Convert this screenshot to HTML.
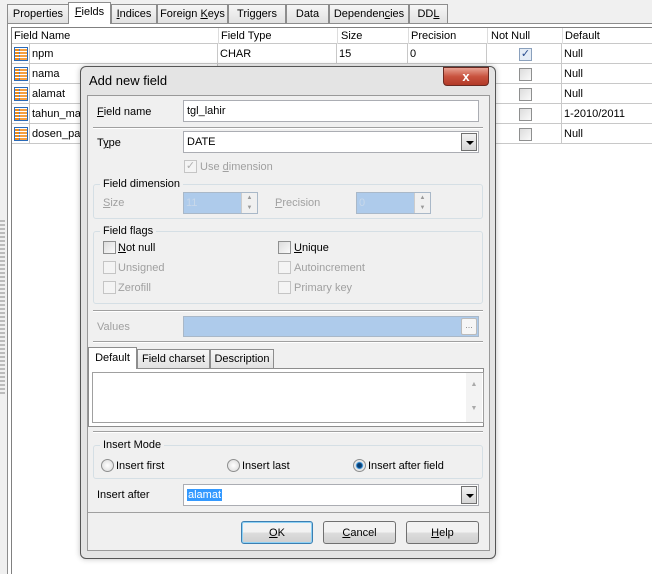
<!DOCTYPE html><html><head><style>
*{box-sizing:border-box;margin:0;padding:0}
body{width:652px;height:574px;background:#f0f0f0;font-family:"Liberation Sans",Tahoma,sans-serif;font-size:11px;color:#000;position:relative;overflow:hidden}
.a{position:absolute}
.tab{position:absolute;top:4px;height:19px;border:1px solid #8d8d8d;border-bottom:none;background:linear-gradient(#f6f6f6,#e1e1e1);text-align:center;line-height:19px}
.cell{position:absolute;height:20px;border-right:1px solid #c8c8c8;border-bottom:1px solid #c8c8c8;line-height:21px;padding-left:2px;white-space:nowrap;overflow:hidden}
.ico{position:absolute;left:14px;width:14px;height:14px;background:repeating-linear-gradient(#fff 0 1px,transparent 1px 3px),linear-gradient(90deg,#e98a1a 0 4px,#4a7fd0 4px 5px,#f5a040 5px 14px);border:1px solid #2a6ab8}
.cb{position:absolute;width:13px;height:13px;border:1px solid #8e8f8f;background:linear-gradient(135deg,#dcdcdc,#fafafa)}
.cbd{border-color:#c5c5c5;background:#f4f4f4}
.in{position:absolute;background:#fff;border:1px solid #abadb3;height:22px;line-height:21px;padding-left:3px}
.dd{position:absolute;right:1px;top:1px;width:16px;height:18px;border:1px solid #707070;background:linear-gradient(#f2f2f2,#d6d6d6)}
.dd:after{content:"";position:absolute;left:4px;top:7px;border:4px solid transparent;border-top:4px solid #000;border-bottom:none}
.grp{position:absolute;border:1px solid #d5dfe5;border-radius:3px}
.gt{position:absolute;background:#f0f0f0;padding:0 3px;top:-8px;left:6px;line-height:14px}
.sep{position:absolute;left:93px;width:390px;height:2px;border-top:1px solid #a0a0a0;border-bottom:1px solid #fff}
.dis{color:#a0a0a0}
.btn{position:absolute;top:521px;height:23px;border:1px solid #707070;border-radius:3px;background:linear-gradient(#f2f2f2 50%,#dddddd 50%,#cfcfcf);text-align:center;line-height:22px}
.rd{position:absolute;width:13px;height:13px;border-radius:50%;border:1px solid #8e8f8f;background:radial-gradient(#fff,#d8d8d8)}
.spin{position:absolute;height:22px;border:1px solid #a9b8c8;background:#aecbeb;color:#c8d8ea;line-height:20px;padding-left:2px}
.spin i{position:absolute;right:0;top:0;width:16px;height:20px;background:#f0f0f0;border-left:1px solid #ccc;font-style:normal;color:#999;font-size:6px;line-height:10px;text-align:center}
.t{margin-top:1px}
u{text-decoration:underline}
</style></head><body>
<div class="tab" style="left:7px;width:62px">Properties</div>
<div class="tab" style="left:68px;top:2px;height:22px;width:43px;background:#fff;z-index:2"><u>F</u>ields</div>
<div class="tab" style="left:111px;width:46px"><u>I</u>ndices</div>
<div class="tab" style="left:157px;width:71px">Foreign <u>K</u>eys</div>
<div class="tab" style="left:228px;width:58px">Triggers</div>
<div class="tab" style="left:286px;width:43px">Data</div>
<div class="tab" style="left:329px;width:80px">Dependen<u>c</u>ies</div>
<div class="tab" style="left:409px;width:39px">DD<u>L</u></div>
<div class="a" style="left:7px;top:23px;width:645px;height:551px;background:#fff;border-left:1px solid #8d8d8d;border-top:1px solid #8d8d8d"></div>
<div class="a" style="left:11px;top:27px;width:641px;height:547px;background:#fff;border-left:1px solid #808080;border-top:1px solid #808080"></div>
<div class="a" style="left:0;top:220px;width:5px;height:175px;background:repeating-linear-gradient(#bbb 0 2px,transparent 2px 4px)"></div>
<div class="a" style="left:12px;top:28px;width:640px;height:16px;border-bottom:1px solid #c8c8c8"></div>
<div class="a" style="left:14px;top:30px">Field Name</div><div class="a" style="left:221px;top:30px">Field Type</div><div class="a" style="left:341px;top:30px">Size</div><div class="a" style="left:411px;top:30px">Precision</div><div class="a" style="left:491px;top:30px">Not Null</div><div class="a" style="left:565px;top:30px">Default</div>
<div class="a" style="left:218px;top:28px;width:1px;height:16px;background:#ddd"></div><div class="a" style="left:337px;top:28px;width:1px;height:16px;background:#ddd"></div><div class="a" style="left:408px;top:28px;width:1px;height:16px;background:#ddd"></div><div class="a" style="left:487px;top:28px;width:1px;height:16px;background:#ddd"></div><div class="a" style="left:562px;top:28px;width:1px;height:16px;background:#ddd"></div>
<div class="cell" style="left:12px;top:44px;width:18px"></div><div class="ico" style="top:47px"></div><div class="cell" style="left:30px;top:44px;width:188px">npm</div><div class="cell" style="left:218px;top:44px;width:119px">CHAR</div><div class="cell" style="left:337px;top:44px;width:71px">15</div><div class="cell" style="left:408px;top:44px;width:79px">0</div><div class="cell" style="left:487px;top:44px;width:75px"></div><div class="cell" style="left:562px;top:44px;width:92px">Null</div>
<div class="cell" style="left:12px;top:64px;width:18px"></div><div class="ico" style="top:67px"></div><div class="cell" style="left:30px;top:64px;width:188px">nama</div><div class="cell" style="left:487px;top:64px;width:75px"></div><div class="cell" style="left:562px;top:64px;width:92px">Null</div>
<div class="cell" style="left:12px;top:84px;width:18px"></div><div class="ico" style="top:87px"></div><div class="cell" style="left:30px;top:84px;width:188px">alamat</div><div class="cell" style="left:487px;top:84px;width:75px"></div><div class="cell" style="left:562px;top:84px;width:92px">Null</div>
<div class="cell" style="left:12px;top:104px;width:18px"></div><div class="ico" style="top:107px"></div><div class="cell" style="left:30px;top:104px;width:188px">tahun_masuk</div><div class="cell" style="left:487px;top:104px;width:75px"></div><div class="cell" style="left:562px;top:104px;width:92px">1-2010/2011</div>
<div class="cell" style="left:12px;top:124px;width:18px"></div><div class="ico" style="top:127px"></div><div class="cell" style="left:30px;top:124px;width:188px">dosen_pa</div><div class="cell" style="left:487px;top:124px;width:75px"></div><div class="cell" style="left:562px;top:124px;width:92px">Null</div>
<div class="cb" style="left:519px;top:48px;border-color:#8aa0bc;background:#e4ecf6;color:#2a4d8f;font-size:11px;line-height:10px;text-align:center">✓</div>
<div class="cb" style="left:519px;top:68px"></div><div class="cb" style="left:519px;top:88px"></div><div class="cb" style="left:519px;top:108px"></div><div class="cb" style="left:519px;top:128px"></div>
<div class="a" style="left:218px;top:64px;width:269px;height:40px;background:#f4f4f4"></div>
<!-- dialog -->
<div class="a" style="left:80px;top:66px;width:416px;height:493px;border:1px solid #555;border-radius:6px;background:#e4e4e4;box-shadow:0 0 6px rgba(0,0,0,.25)"></div>
<div class="a" style="left:89px;top:73px;font-size:13px">Add new field</div>
<div class="a" style="left:443px;top:67px;width:46px;height:19px;border:1px solid #6b2a22;border-radius:0 0 4px 4px;background:linear-gradient(#e8a293,#c9533f 50%,#b23a28);color:#fff;font-weight:bold;font-size:13px;text-align:center;line-height:17px">x</div>
<div class="a" style="left:87px;top:95px;width:403px;height:456px;border:1px solid #999;background:#f0f0f0"></div>
<div class="a" style="left:97px;top:106px"><u>F</u>ield name</div>
<div class="in" style="left:183px;top:100px;width:296px">tgl_lahir</div>
<div class="sep" style="top:127px"></div>
<div class="a" style="left:97px;top:137px">T<u>y</u>pe</div>
<div class="in" style="left:183px;top:131px;width:296px">DATE<div class="dd"></div></div>
<div class="cb cbd" style="left:184px;top:160px;color:#b0b0b0;line-height:10px;text-align:center">✓</div>
<div class="a dis" style="left:200px;top:161px">Use <u>d</u>imension</div>
<div class="grp" style="left:93px;top:184px;width:390px;height:35px"><div class="gt">Field dimension</div></div>
<div class="a dis" style="left:103px;top:197px"><u>S</u>ize</div>
<div class="spin" style="left:183px;top:192px;width:75px">11<i>▲<br>▼</i></div>
<div class="a dis" style="left:275px;top:197px"><u>P</u>recision</div>
<div class="spin" style="left:356px;top:192px;width:75px">0<i>▲<br>▼</i></div>
<div class="grp" style="left:93px;top:231px;width:390px;height:73px"><div class="gt">Field flags</div></div>
<div class="cb" style="left:103px;top:241px"></div><div class="a" style="left:118px;top:242px"><u>N</u>ot null</div>
<div class="cb" style="left:278px;top:241px"></div><div class="a" style="left:294px;top:242px"><u>U</u>nique</div>
<div class="cb cbd" style="left:103px;top:261px"></div><div class="a dis" style="left:118px;top:262px">Unsigned</div>
<div class="cb cbd" style="left:278px;top:261px"></div><div class="a dis" style="left:294px;top:262px">Autoincrement</div>
<div class="cb cbd" style="left:103px;top:281px"></div><div class="a dis" style="left:118px;top:282px">Zerofill</div>
<div class="cb cbd" style="left:278px;top:281px"></div><div class="a dis" style="left:294px;top:282px">Primary key</div>
<div class="sep" style="top:310px"></div>
<div class="a dis" style="left:97px;top:321px">Values</div>
<div class="a" style="left:183px;top:316px;width:296px;height:21px;border:1px solid #a9b8c8;background:#aecbeb"><div class="a" style="right:1px;top:1px;width:16px;height:17px;background:#f6f6f6;border:1px solid #bbb;border-radius:2px;color:#888;font-size:9px;text-align:center;line-height:12px">...</div></div>
<div class="sep" style="top:341px"></div>
<div class="a" style="left:88px;top:368px;width:396px;height:59px;border:1px solid #8d8d8d;background:#fff"></div>
<div class="tab" style="left:137px;top:349px;height:19px;width:73px">Field charset</div>
<div class="tab" style="left:210px;top:349px;height:19px;width:64px">Description</div>
<div class="tab" style="left:88px;top:347px;height:22px;width:49px;background:#fff;z-index:2;text-align:center;line-height:20px">Default</div>
<div class="a" style="left:92px;top:372px;width:392px;height:51px;border:1px solid #a0a0a0;background:#fff"></div>
<div class="a" style="left:466px;top:373px;width:16px;height:49px;background:#f3f3f3;color:#aaa;font-size:7px;text-align:center;line-height:24px">▲<br>▼</div>
<div class="sep" style="top:431px"></div>
<div class="grp" style="left:93px;top:445px;width:390px;height:34px"><div class="gt">Insert Mode</div></div>
<div class="rd" style="left:101px;top:459px"></div><div class="a" style="left:116px;top:460px">Insert first</div>
<div class="rd" style="left:227px;top:459px"></div><div class="a" style="left:242px;top:460px">Insert last</div>
<div class="rd" style="left:353px;top:459px;background:radial-gradient(#0a3d70 0 2px,#2a8bd8 3px,#e8e8e8 4px)"></div><div class="a" style="left:368px;top:460px">Insert after field</div>
<div class="a" style="left:97px;top:489px">Insert after</div>
<div class="in" style="left:183px;top:484px;width:296px"><span style="background:#3399ff;color:#fff;padding:0 1px">alamat</span><div class="dd"></div></div>
<div class="a" style="left:88px;top:512px;width:401px;height:1px;background:#a0a0a0"></div>
<div class="btn" style="left:241px;width:72px;border-color:#3c7fb1;box-shadow:inset 0 0 0 1px #8ed1f5"><u>O</u>K</div>
<div class="btn" style="left:323px;width:73px"><u>C</u>ancel</div>
<div class="btn" style="left:406px;width:73px"><u>H</u>elp</div>
</body></html>
